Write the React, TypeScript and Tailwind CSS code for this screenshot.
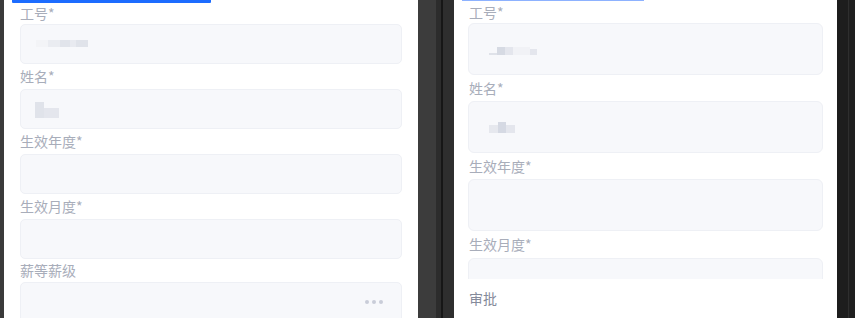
import React from "react";

const font = { fontFamily: '"Noto Sans CJK SC", "Noto Sans", sans-serif' };

function Label({ text, h }: { text: string; h: string }) {
  return (
    <div className={`flex shrink-0 items-center text-[14px] text-[#a8adba] ${h}`}>{text}</div>
  );
}

function Box({ h, r, children }: { h: string; r: string; children?: React.ReactNode }) {
  return (
    <div className={`relative w-full shrink-0 ${h} ${r} border border-[#eef0f5] bg-[#f7f8fb]`}>{children}</div>
  );
}

export default function App() {
  return (
    <div className="flex h-[318px] w-[855px] overflow-hidden bg-[#2b2b2b]" style={font}>
      <div className="w-[4px] shrink-0 bg-[#3a3a3a]" />
      {/* left panel */}
      <div className="flex w-[414px] shrink-0 flex-col overflow-hidden bg-white">
        <div className="ml-[8px] h-[3px] w-[199px] shrink-0 rounded-b-[1px] bg-[#1c6cff]" />
        <div className="flex shrink-0 flex-col px-[16px]">
          <Label text="工号*" h="h-[21px]" />
          <Box h="h-[40px]" r="rounded-[5px]">
            <div className="absolute left-[15px] top-[15px] flex h-[7px] blur-[0.6px]">
              <div className="w-[12px] bg-[#f3f4f7]" />
              <div className="w-[12px] bg-[#eaecf1]" />
              <div className="w-[10px] bg-[#e1e4eb]" />
              <div className="w-[6px] bg-[#e8eaf0]" />
              <div className="w-[12px] bg-[#e0e3ea]" />
            </div>
          </Box>
          <Label text="姓名*" h="h-[25px]" />
          <Box h="h-[40px]" r="rounded-[5px]">
            <div className="absolute left-[14px] top-[12px] flex items-end blur-[0.5px]">
              <div className="h-[16px] w-[9px] bg-[#e0e3ea]" />
              <div className="h-[10px] w-[15px] bg-[#e4e6ed]" />
            </div>
          </Box>
          <Label text="生效年度*" h="h-[25px]" />
          <Box h="h-[40px]" r="rounded-[5px]" />
          <Label text="生效月度*" h="h-[25px]" />
          <Box h="h-[40px]" r="rounded-[5px]" />
          <Label text="薪等薪级" h="h-[23px]" />
          <Box h="h-[44px]" r="rounded-[5px]">
            <div className="absolute left-[344px] top-[17px] flex gap-[3px]">
              <div className="h-[4px] w-[4px] rounded-full bg-[#c9cdd8]" />
              <div className="h-[4px] w-[4px] rounded-full bg-[#c9cdd8]" />
              <div className="h-[4px] w-[4px] rounded-full bg-[#c9cdd8]" />
            </div>
          </Box>
        </div>
      </div>
      {/* separator */}
      <div className="flex w-[36px] shrink-0">
        <div className="w-[18px] bg-[#3c3c3c]" />
        <div className="w-[5px] bg-[#2c2c2c]" />
        <div className="w-[2px] bg-[#161616]" />
        <div className="w-[11px] bg-[#2e2e2e]" />
      </div>
      {/* right panel */}
      <div className="flex w-[383px] shrink-0 flex-col overflow-hidden bg-white">
        <div className="ml-[8px] h-[1px] w-[182px] shrink-0 bg-[#8db2ff]" />
        <div className="flex h-[278px] shrink-0 flex-col overflow-hidden px-[14px]">
          <Label text="工号*" h="h-[22px] pl-[1px]" />
          <Box h="h-[52px]" r="rounded-[6px]">
            <div className="absolute left-[20px] top-[23px] flex h-[8px] items-end blur-[0.5px]">
              <div className="h-[2px] w-[8px] bg-[#dfe2e9]" />
              <div className="h-[8px] w-[8px] bg-[#d6dae3]" />
              <div className="h-[8px] w-[8px] bg-[#e4e6ed]" />
              <div className="h-[8px] w-[17px] bg-[#f1f2f6]" />
              <div className="h-[6px] w-[7px] bg-[#e4e6ed]" />
            </div>
          </Box>
          <Label text="姓名*" h="h-[26px] pl-[1px]" />
          <Box h="h-[52px]" r="rounded-[6px]">
            <div className="absolute left-[20px] top-[20px] flex h-[11px] items-end blur-[0.5px]">
              <div className="h-[8px] w-[9px] bg-[#e6e8ee]" />
              <div className="h-[11px] w-[8px] bg-[#d5d9e3]" />
              <div className="h-[8px] w-[9px] bg-[#e4e6ed]" />
            </div>
          </Box>
          <Label text="生效年度*" h="h-[26px] pl-[1px]" />
          <Box h="h-[52px]" r="rounded-[6px]" />
          <Label text="生效月度*" h="h-[27px] pl-[1px]" />
          <Box h="h-[52px]" r="rounded-[6px]" />
        </div>
        <div className="flex h-[39px] shrink-0 items-center px-[15px] text-[14px] text-[#858b9b]">审批</div>
      </div>
      <div className="flex w-[18px] shrink-0">
        <div className="w-[11px] bg-[#1d1d1d]" />
        <div className="w-[1px] bg-[#2e2e2e]" />
        <div className="w-[6px] bg-[#1f1f1f]" />
      </div>
    </div>
  );
}
